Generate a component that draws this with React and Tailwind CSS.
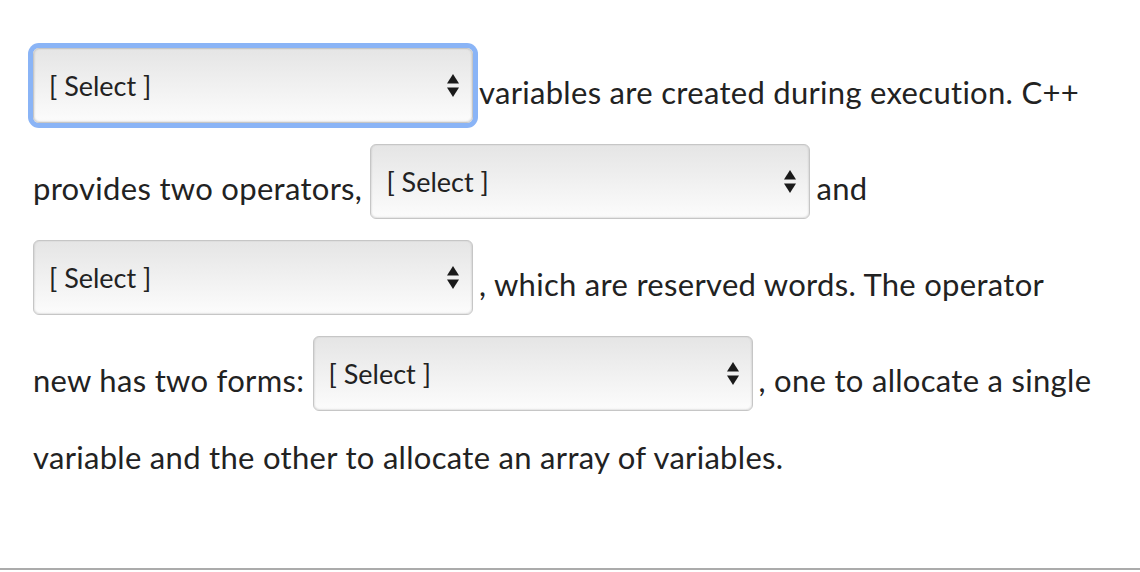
import React from 'react';

const Arrows = () => (
  <svg width="12" height="23" viewBox="0 0 12 23" className="shrink-0">
    <path d="M0 9.5 L6 0 L12 9.5 Z" fill="#1a1a1a" />
    <path d="M0 13.5 L12 13.5 L6 23 Z" fill="#1a1a1a" />
  </svg>
);

const FakeSelect = ({ focused }) => (
  <span
    className={
      'inline-flex h-[75px] w-[440px] items-center justify-between rounded-[6px] border border-[#c6c6c6] bg-linear-to-b from-[#e5e5e5] to-[#fcfcfc] pl-[15px] pr-[13px] align-[8px] mb-[21px] mr-[6px] tracking-normal shadow-[inset_0_-1px_2px_rgba(0,0,0,0.08),inset_1px_0_2px_rgba(0,0,0,0.06),inset_-1px_0_2px_rgba(0,0,0,0.06)] ' +
      (focused ? 'ring-[5px] ring-[#8ab4f6]' : '')
    }
  >
    <span className="text-[27px] leading-[32px]">[ Select ]</span>
    <Arrows />
  </span>
);

const App = () => {
  return (
    <div className="min-h-[572px] bg-white font-['Lato','Liberation_Sans',sans-serif] text-[#222] [font-variant-ligatures:none]">
      <div className="h-[570px] border-b-2 border-[#ababab] pl-[33px] pr-[44px] pt-[48px]">
        <p className="text-[31px] leading-[50px] tracking-[0.3px]">
          <FakeSelect focused />variables are created during execution. C++ provides two operators,{' '}
          <FakeSelect />and <FakeSelect />, which are reserved words. The operator new has two forms:{' '}
          <FakeSelect />, one to allocate a single variable and the other to allocate an array of variables.
        </p>
      </div>
    </div>
  );
};

export default App;
